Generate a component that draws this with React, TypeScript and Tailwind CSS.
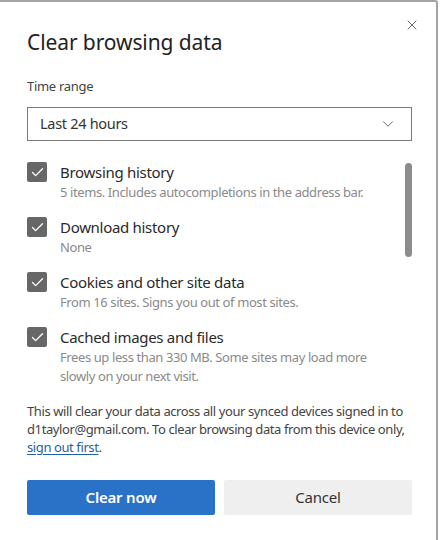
import { Check, ChevronDown, X } from "lucide-react";

const ITEMS = [
  { title: "Browsing history", desc: "5 items. Includes autocompletions in the address bar." },
  { title: "Download history", desc: "None" },
  { title: "Cookies and other site data", desc: "From 16 sites. Signs you out of most sites." },
  {
    title: "Cached images and files",
    desc: "Frees up less than 330 MB. Some sites may load more slowly on your next visit.",
  },
];

export default function App() {
  return (
    <div
      className="h-[540px] w-[441px] overflow-hidden bg-white"
      style={{ fontFamily: '"Noto Sans", "Open Sans", sans-serif' }}
    >
      <div className="relative h-[540px] w-[438px] rounded-tr-[3px] border-t-[2px] border-r-[2px] border-[#a3a3a3] bg-white pl-[27px] pr-[25px]">
        <button className="absolute right-[16px] top-[15px] text-[#555]">
          <X size={16} strokeWidth={1.3} />
        </button>

        <h1 className="pt-[26px] text-[21px] leading-[28px] tracking-[-0.1px] text-[#222]">Clear browsing data</h1>

        <div className="mt-[21px] text-[13px] leading-[18px] tracking-[-0.3px] text-[#444]">Time range</div>
        <div className="mt-[12px] flex h-[34px] w-[385px] items-center justify-between border border-[#7a7a7a] pl-[12px] pr-[14px] text-[14.5px] tracking-[-0.3px] text-[#333]">
          <span>Last 24 hours</span>
          <ChevronDown size={18} strokeWidth={1.2} className="text-[#555]" />
        </div>

        <div className="mt-[21px] flex h-[223px] w-[385px] overflow-hidden">
          <div className="flex flex-1 flex-col gap-[15px]">
            {ITEMS.map((it) => (
              <div key={it.title} className="flex gap-[13px]">
                <div className="flex h-[20px] w-[20px] shrink-0 items-center justify-center rounded-[2px] bg-[#676767]">
                  <Check size={15} strokeWidth={2.2} className="text-white" />
                </div>
                <div className="w-[320px]">
                  <div className="text-[15px] leading-[20px] tracking-[-0.3px] text-[#2a2a2a]">{it.title}</div>
                  <div className="mt-[1px] text-[13px] leading-[19px] tracking-[-0.4px] text-[#8a8a8a]">{it.desc}</div>
                </div>
              </div>
            ))}
          </div>
          <div className="w-[7px] shrink-0 pt-[1px]">
            <div className="h-[94px] w-[7px] rounded-full bg-[#8c8c8c]" />
          </div>
        </div>

        <p className="mt-[17px] w-[390px] text-[13px] leading-[18px] tracking-[-0.4px] text-[#444]">
          This will clear your data across all your synced devices signed in to d1taylor@gmail.com. To clear
          browsing data from this device only,{" "}
          <a className="text-[#1f5fa6] underline underline-offset-2">sign out first</a>.
        </p>

        <div className="mt-[24px] flex w-[385px] gap-[9px]">
          <button className="h-[35px] flex-1 rounded-[2px] bg-[#2a72c8] text-[15px] font-semibold tracking-[-0.2px] text-white">
            Clear now
          </button>
          <button className="h-[35px] flex-1 rounded-[2px] bg-[#efefef] text-[15px] tracking-[-0.2px] text-[#333]">
            Cancel
          </button>
        </div>
      </div>
    </div>
  );
}
